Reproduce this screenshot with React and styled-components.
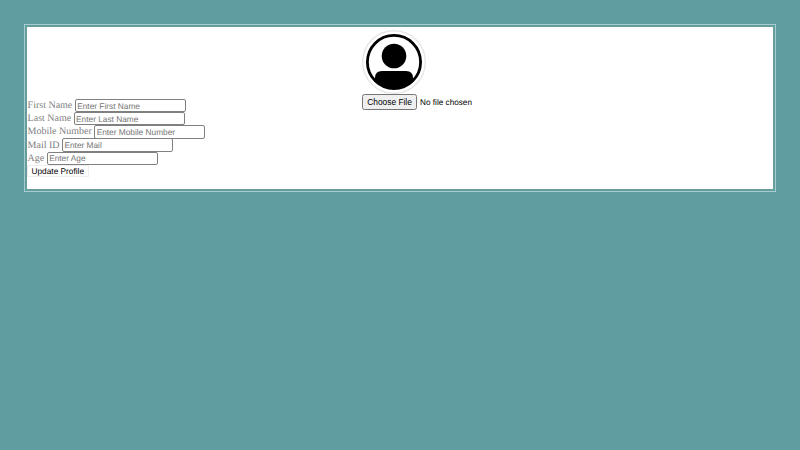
import React from 'react';
import styled, { createGlobalStyle } from 'styled-components';

const GlobalStyle = createGlobalStyle`
    html, body {
        margin: 0;
        min-height: 100%;
        background: cadetblue;
    }
    body {
        font-family: "Liberation Serif", serif;
        text-rendering: geometricPrecision;
    }
    input, button {
        text-rendering: geometricPrecision;
    }
`;

const Page = styled.div`
    padding: 26px;
`;

const Card = styled.form`
    background: #fff;
    border: 1px solid #6f9a9c;
    outline: 1px solid #a8cdce;
    outline-offset: 1px;
    height: 162px;
    color: gray;
    font-size: 10px;
`;

const PhotoBlock = styled.div`
    width: 76px;
    height: 69px;
    margin: 0 auto;
    padding-top: 3px;
`;

const Avatar = styled.svg`
    display: block;
    width: 64px;
    height: 64px;
`;

const FileInput = styled.input`
    display: block;
    font: 8.2px "Liberation Sans", sans-serif;
    color: #000;
    width: 125px;

    &::file-selector-button {
        padding: 1px 3.2px;
        margin-right: 3px;
        font: 8.4px "Liberation Sans", sans-serif;
    }
`;

const Row = styled.div`
    height: 13.2px;
    display: flex;
    align-items: center;
    gap: 2.6px;
    padding-left: 0.6px;
`;

const Field = styled.input`
    box-sizing: border-box;
    width: 111px;
    height: 13.4px;
    padding: 0 1.3px;
    border: 1px solid #808080;
    border-radius: 2px;
    font: 8.3px "Liberation Sans", sans-serif;
    &::placeholder {
        color: #757575;
    }
`;

const SubmitButton = styled.button`
    display: block;
    margin-top: 0.4px;
    height: 12px;
    padding: 0 3.5px;
    background: #fff;
    border: 1px solid #eee;
    color: #000;
    font: 8.3px "Liberation Sans", sans-serif;
`;

const fields = [
    ['First Name', 'Enter First Name'],
    ['Last Name', 'Enter Last Name'],
    ['Mobile Number', 'Enter Mobile Number'],
    ['Mail ID', 'Enter Mail'],
    ['Age', 'Enter Age'],
];

const App = () => (
    <Page>
        <GlobalStyle />
        <Card onSubmit={(e) => e.preventDefault()}>
            <PhotoBlock>
                <Avatar viewBox="0 0 64 64">
                    <circle cx="32" cy="32" r="31.3" fill="#fff" stroke="#e6e6e6" strokeWidth="1.4" />
                    <circle cx="32" cy="32" r="26.6" fill="#fff" stroke="#000" strokeWidth="2.8" />
                    <circle cx="32" cy="26" r="12.3" fill="#000" />
                    <path d="M13 49.7 V48 Q13 41 20 41 H44 Q51 41 51 48 V49.7 A26 26 0 0 1 13 49.7 Z" fill="#000" />
                </Avatar>
                <FileInput type="file" />
            </PhotoBlock>
            {fields.map(([label, placeholder]) => (
                <Row key={label}>
                    <span>{label}</span>
                    <Field placeholder={placeholder} />
                </Row>
            ))}
            <SubmitButton>Update Profile</SubmitButton>
        </Card>
    </Page>
);

export default App;
